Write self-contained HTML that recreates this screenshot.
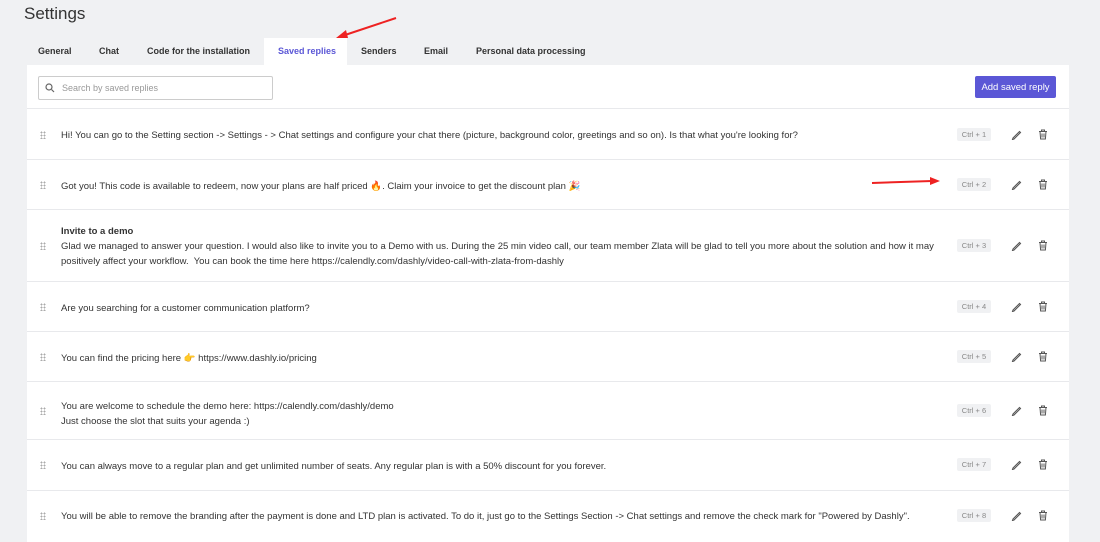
<!DOCTYPE html><html><head><style>
html,body{margin:0;width:1100px;height:542px;overflow:hidden}
body{background:#f0f1f3;font-family:"Liberation Sans",sans-serif;position:relative;color:#222}
.a{position:absolute}
h1{position:absolute;left:24px;top:4px;margin:0;font-size:17px;font-weight:normal;color:#333}
.tab{position:absolute;top:46px;font-size:9px;font-weight:bold;color:#333}
.panel{position:absolute;left:27px;top:65px;width:1042px;height:480px;background:#fff}
.row{position:absolute;left:0;width:1042px;border-top:1px solid #e8e9ec;font-size:9.5px;color:#333}
.t{position:absolute;left:34px;line-height:15px}
.h{position:absolute;left:13px;width:6px;height:8px;background:radial-gradient(circle,#aaa 0.8px,transparent 1px) 0 0/3px 3px}
.k{position:absolute;left:930px;width:34px;height:13px;background:#f0f1f3;color:#888;font-size:7.5px;text-align:center;line-height:13px;border-radius:2px}
.p{position:absolute;left:984px}
.d{position:absolute;left:1011px}
</style></head><body>
<h1>Settings</h1>
<div class="a" style="left:264px;top:38px;width:83px;height:28px;background:#fff"></div>
<span class="tab" style="left:38px">General</span>
<span class="tab" style="left:99px">Chat</span>
<span class="tab" style="left:147px">Code for the installation</span>
<span class="tab" style="left:278px;color:#5b57d6">Saved replies</span>
<span class="tab" style="left:361px">Senders</span>
<span class="tab" style="left:424px">Email</span>
<span class="tab" style="left:476px">Personal data processing</span>
<svg class="a" style="left:290px;top:14px" width="112" height="26"><path d="M106 4L52 22" stroke="#e22" stroke-width="2"/><path d="M46 24L56 16L58 24Z" fill="#e22"/></svg>
<div class="panel">
<div class="a" style="left:11px;top:11px;width:233px;height:22px;border:1px solid #ccc;border-radius:2px;font-size:9px;color:#999;line-height:22px"><svg class="a" style="left:6px;top:6px" width="10" height="10"><circle cx="4" cy="4" r="3" fill="none" stroke="#666" stroke-width="1.2"/><path d="M6.5 6.5L9 9" stroke="#666" stroke-width="1.2"/></svg><span style="position:absolute;left:23px">Search by saved replies</span></div>
<div class="a" style="left:948px;top:11px;width:81px;height:22px;background:#5b57d6;border-radius:2px;color:#fff;font-size:9.5px;display:flex;align-items:center;justify-content:center">Add saved reply</div>
</div>
<div id="rows"></div>
<script>
var R=[[108,51,[134],"Hi! You can go to the Setting section -> Settings - > Chat settings and configure your chat there (picture, background color, greetings and so on). Is that what you're looking for?","Ctrl + 1",134],
[159,50,[185],"Got you! This code is available to redeem, now your plans are half priced 🔥. Claim your invoice to get the discount plan 🎉","Ctrl + 2",184],
[209,72,[230],"<b>Invite to a demo</b><br>Glad we managed to answer your question. I would also like to invite you to a Demo with us. During the 25 min video call, our team member Zlata will be glad to tell you more about the solution and how it may<br>positively affect your workflow.&nbsp; You can book the time here https://calendly.com/dashly/video-call-with-zlata-from-dashly","Ctrl + 3",245],
[281,50,[307],"Are you searching for a customer communication platform?","Ctrl + 4",306],
[331,50,[357],"You can find the pricing here 👉 https://www.dashly.io/pricing","Ctrl + 5",356],
[381,58,[405],"You are welcome to schedule the demo here: https://calendly.com/dashly/demo<br>Just choose the slot that suits your agenda :)","Ctrl + 6",410],
[439,51,[465],"You can always move to a regular plan and get unlimited number of seats. Any regular plan is with a 50% discount for you forever.","Ctrl + 7",464],
[490,52,[515],"You will be able to remove the branding after the payment is done and LTD plan is activated. To do it, just go to the Settings Section -> Chat settings and remove the check mark for \"Powered by Dashly\".","Ctrl + 8",515]];
var h="";R.forEach(function(r){var ty=r[2][0]-r[0]-7;var c=r[5]-r[0];
h+='<div class="row" style="left:27px;top:'+r[0]+'px;height:'+r[1]+'px;background:#fff"><div class="h" style="top:'+(c-4)+'px"></div><div class="t" style="top:'+ty+'px">'+r[3]+'</div><div class="k" style="top:'+(c-7)+'px">'+r[4]+'</div>'+
'<svg class="p" style="top:'+(c-6)+'px" width="11" height="11"><path d="M2 9L8.5 2.5L9.5 3.5L3 10L1.5 10.5Z" fill="none" stroke="#555" stroke-width="1.1"/></svg>'+
'<svg class="d" style="top:'+(c-6)+'px" width="10" height="11"><path d="M1 2.5H9M3.5 2.5V1H6.5V2.5M2 2.5L2.6 10H7.4L8 2.5M4 4.5V8.5M6 4.5V8.5" fill="none" stroke="#555" stroke-width="1"/></svg></div>';});
document.getElementById("rows").innerHTML=h;
</script>
<svg class="a" style="left:870px;top:176px" width="72" height="12"><path d="M2 7L62 5" stroke="#e22" stroke-width="2"/><path d="M70 5L60 1L60 9Z" fill="#e22"/></svg>
</body></html>
